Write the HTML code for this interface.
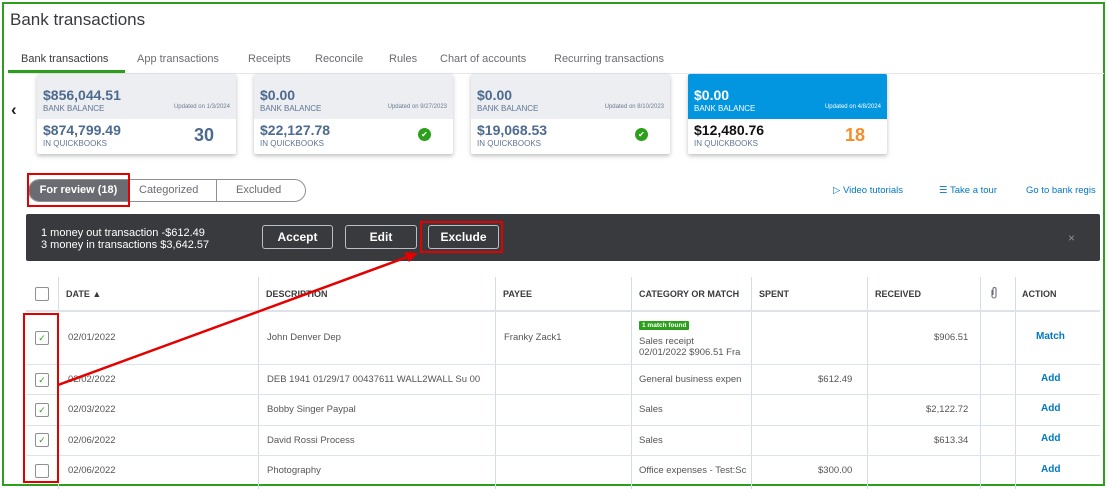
<!DOCTYPE html>
<html><head><meta charset="utf-8"><style>
*{box-sizing:border-box;margin:0;padding:0}
body{width:1107px;height:489px;overflow:hidden;background:#fff;font-family:"Liberation Sans",sans-serif;position:relative;color:#393a3d}
.a{position:absolute;white-space:nowrap}
.card{position:absolute;top:74px;width:199px;height:80px;background:#fff;box-shadow:0 2px 4px rgba(0,0,0,.25);border-radius:2px;overflow:hidden}
.card .top{height:45px;background:#eceef1;padding:13px 6px 0 6px;position:relative}
.card .big{font-size:14px;font-weight:bold;color:#4d6a8f}
.card .lbl{font-size:8px;color:#5f7594;margin-top:1px}
.card .upd{position:absolute;right:6px;top:30px;font-size:6px;color:#6b7c93}
.card .bot{padding:3px 6px;position:relative}
.card .bot .big{font-size:14px}
.card .chk{position:absolute;right:22px;top:9px;width:13px;height:13px;border-radius:50%;background:#2ca01c;color:#fff;font-size:8px;text-align:center;line-height:13px}
.th{position:absolute;top:289px;font-size:9px;font-weight:bold;color:#393a3d}
.vl{position:absolute;top:277px;height:212px;width:1px;background:#d4dce8}
.hl{position:absolute;left:26px;width:1074px;height:1px;background:#dde3ea}
.td{position:absolute;font-size:9.5px;color:#555}
.cb{position:absolute;left:35px;width:14px;height:14px;border:1px solid #8d9096;border-radius:2px;background:#fff;color:#2ca01c;font-size:9px;text-align:center;line-height:12px}
.add{position:absolute;font-size:10px;font-weight:bold;color:#0077c5}
.btn{position:absolute;top:225px;height:24px;border:1px solid #babec5;border-radius:3px;color:#fff;font-size:12px;font-weight:bold;text-align:center;line-height:22px}
.tab{position:absolute;top:53px;font-size:11px;color:#6b6c72;white-space:nowrap}
</style></head><body>
<div class="a" style="left:2px;top:2px;width:1103px;height:484px;border:2px solid #2ca01c"></div>
<div class="a" style="left:10px;top:10px;font-size:17px;color:#393a3d">Bank transactions</div>
<div class="tab" style="left:21px;color:#393a3d">Bank transactions</div>
<div class="a" style="left:8px;top:70px;width:117px;height:3px;background:#2ca01c"></div>
<div class="tab" style="left:137px">App transactions</div>
<div class="tab" style="left:248px">Receipts</div>
<div class="tab" style="left:315px">Reconcile</div>
<div class="tab" style="left:389px">Rules</div>
<div class="tab" style="left:440px">Chart of accounts</div>
<div class="tab" style="left:554px">Recurring transactions</div>
<div class="a" style="left:10px;top:73px;width:1094px;height:1px;background:#e4e6ea"></div>
<div class="a" style="left:11px;top:100px;font-size:17px;font-weight:bold;color:#222">&#8249;</div>

<div class="card" style="left:37px"><div class="top"><div class="big">$856,044.51</div><div class="lbl">BANK BALANCE</div><div class="upd">Updated on 1/3/2024</div></div><div class="bot"><div class="big">$874,799.49</div><div class="lbl">IN QUICKBOOKS</div><div class="a" style="right:22px;top:6px;font-size:18px;font-weight:bold;color:#4d6a8f">30</div></div></div>
<div class="card" style="left:254px"><div class="top"><div class="big">$0.00</div><div class="lbl">BANK BALANCE</div><div class="upd">Updated on 9/27/2023</div></div><div class="bot"><div class="big">$22,127.78</div><div class="lbl">IN QUICKBOOKS</div><div class="chk">&#10004;</div></div></div>
<div class="card" style="left:471px"><div class="top"><div class="big">$0.00</div><div class="lbl">BANK BALANCE</div><div class="upd">Updated on 8/10/2023</div></div><div class="bot"><div class="big">$19,068.53</div><div class="lbl">IN QUICKBOOKS</div><div class="chk">&#10004;</div></div></div>
<div class="card" style="left:688px"><div class="top" style="background:#0396e0"><div class="big" style="color:#fff">$0.00</div><div class="lbl" style="color:#fff">BANK BALANCE</div><div class="upd" style="color:#fff">Updated on 4/8/2024</div></div><div class="bot"><div class="big" style="color:#111">$12,480.76</div><div class="lbl">IN QUICKBOOKS</div><div class="a" style="right:22px;top:6px;font-size:18px;font-weight:bold;color:#f58c29">18</div></div></div>

<div class="a" style="left:28px;top:179px;width:278px;height:23px;border:1px solid #8d9096;border-radius:12px"></div>
<div class="a" style="left:29px;top:180px;width:99px;height:21px;background:#6b6c72;border-radius:11px 0 0 11px;color:#fff;font-size:11px;font-weight:bold;text-align:center;line-height:21px">For review (18)</div>
<div class="a" style="left:216px;top:180px;width:1px;height:21px;background:#8d9096"></div>
<div class="a" style="left:139px;top:184px;font-size:11px;color:#6b6c72">Categorized</div>
<div class="a" style="left:236px;top:184px;font-size:11px;color:#6b6c72">Excluded</div>
<div class="a" style="left:27px;top:173px;width:103px;height:34px;border:2px solid #e50000"></div>

<div class="a" style="left:833px;top:185px;font-size:9.5px;color:#0077c5">&#9655; Video tutorials</div>
<div class="a" style="left:939px;top:185px;font-size:9.5px;color:#0077c5">&#9776; Take a tour</div>
<div class="a" style="left:1026px;top:185px;font-size:9.5px;color:#0077c5">Go to bank regis</div>

<div class="a" style="left:26px;top:214px;width:1074px;height:47px;background:#393a3d;border-radius:2px"></div>
<div class="a" style="left:41px;top:227px;font-size:11px;color:#fff;line-height:12px">1 money out transaction -$612.49<br>3 money in transactions $3,642.57</div>
<div class="btn" style="left:262px;width:71px">Accept</div>
<div class="btn" style="left:345px;width:72px">Edit</div>
<div class="btn" style="left:428px;width:71px">Exclude</div>
<div class="a" style="left:420px;top:221px;width:83px;height:32px;border:2px solid #e50000"></div>
<div class="a" style="left:1068px;top:231px;font-size:12px;color:#8d9096">&#215;</div>

<div class="vl" style="left:58px"></div><div class="vl" style="left:258px"></div><div class="vl" style="left:495px"></div><div class="vl" style="left:631px"></div><div class="vl" style="left:751px"></div><div class="vl" style="left:867px"></div><div class="vl" style="left:980px"></div><div class="vl" style="left:1015px"></div>
<div class="cb" style="top:287px"></div>
<div class="th" style="left:66px">DATE &#9650;</div>
<div class="th" style="left:266px">DESCRIPTION</div>
<div class="th" style="left:503px">PAYEE</div>
<div class="th" style="left:639px">CATEGORY OR MATCH</div>
<div class="th" style="left:759px">SPENT</div>
<div class="th" style="left:875px">RECEIVED</div>
<svg class="a" style="left:990px;top:286px" width="8" height="13"><path d="M2 4 V10 a2 2 0 0 0 4 0 V3 a1.5 1.5 0 0 0 -3 0 V9" fill="none" stroke="#6b6c72" stroke-width="1.1"/></svg>
<div class="th" style="left:1022px">ACTION</div>
<div class="hl" style="top:310px;height:2px"></div>
<div class="hl" style="top:364px"></div><div class="hl" style="top:394px"></div><div class="hl" style="top:425px"></div><div class="hl" style="top:455px"></div>

<div class="cb" style="top:331px">&#10003;</div><div class="cb" style="top:373px">&#10003;</div><div class="cb" style="top:403px">&#10003;</div><div class="cb" style="top:433px">&#10003;</div><div class="cb" style="top:464px"></div>

<div class="td" style="left:68px;top:332px">02/01/2022</div>
<div class="td" style="left:267px;top:332px">John Denver Dep</div>
<div class="td" style="left:504px;top:332px">Franky Zack1</div>
<div class="a" style="left:639px;top:321px;background:#2ca01c;color:#fff;font-size:6.5px;font-weight:bold;padding:1px 3px;border-radius:1px">1 match found</div>
<div class="td" style="left:639px;top:336px;line-height:11px;width:110px;overflow:hidden">Sales receipt<br>02/01/2022 $906.51 Fra</div>
<div class="td" style="left:934px;top:332px">$906.51</div>
<div class="add" style="left:1036px;top:331px">Match</div>

<div class="td" style="left:68px;top:374px">02/02/2022</div>
<div class="td" style="left:267px;top:374px;width:228px;overflow:hidden">DEB 1941 01/29/17 00437611 WALL2WALL Su 00</div>
<div class="td" style="left:639px;top:374px;width:110px;overflow:hidden">General business expen</div>
<div class="td" style="left:818px;top:374px">$612.49</div>
<div class="add" style="left:1041px;top:373px">Add</div>

<div class="td" style="left:68px;top:404px">02/03/2022</div>
<div class="td" style="left:267px;top:404px">Bobby Singer Paypal</div>
<div class="td" style="left:639px;top:404px">Sales</div>
<div class="td" style="left:926px;top:404px">$2,122.72</div>
<div class="add" style="left:1041px;top:403px">Add</div>

<div class="td" style="left:68px;top:435px">02/06/2022</div>
<div class="td" style="left:267px;top:435px">David Rossi Process</div>
<div class="td" style="left:639px;top:435px">Sales</div>
<div class="td" style="left:934px;top:435px">$613.34</div>
<div class="add" style="left:1041px;top:433px">Add</div>

<div class="td" style="left:68px;top:465px">02/06/2022</div>
<div class="td" style="left:267px;top:465px">Photography</div>
<div class="td" style="left:639px;top:465px;width:110px;overflow:hidden">Office expenses - Test:Sc</div>
<div class="td" style="left:818px;top:465px">$300.00</div>
<div class="add" style="left:1041px;top:464px">Add</div>

<div class="a" style="left:23px;top:313px;width:36px;height:170px;border:2px solid #e50000"></div>
<svg class="a" style="left:0;top:0" width="1107" height="489"><line x1="58" y1="385" x2="410" y2="256" stroke="#e50000" stroke-width="2.5"/><polygon points="418,253 404,252 409,262" fill="#e50000"/></svg>
</body></html>
